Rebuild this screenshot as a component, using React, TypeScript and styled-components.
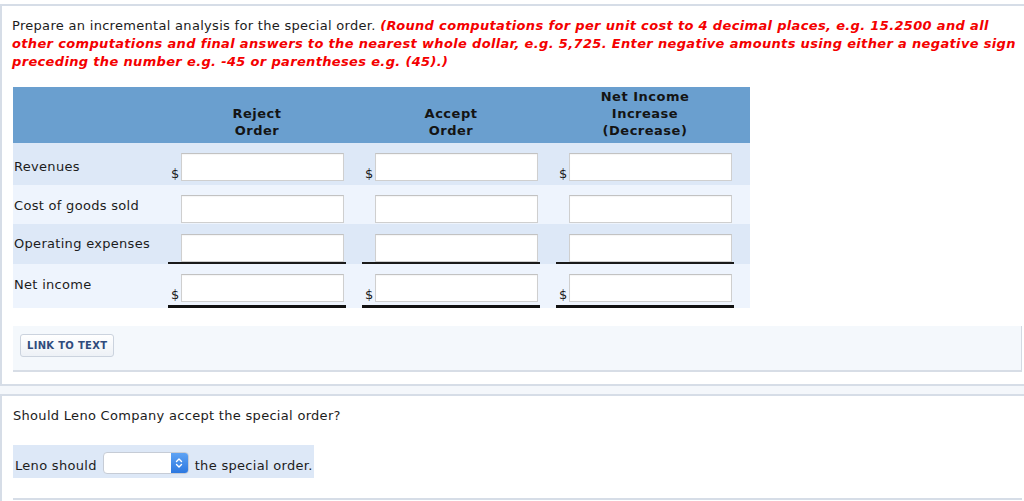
import React from 'react'
import styled, { createGlobalStyle } from 'styled-components'

const GlobalStyle = createGlobalStyle`
	html, body {
		margin: 0;
		padding: 0;
		background: #ffffff;
		overflow: hidden;
	}

	body {
		font-family: 'DejaVu Sans', Verdana, sans-serif;
		font-size: 13px;
		line-height: 18px;
		letter-spacing: 0.3px;
		color: #1c1c1c;
	}
`

const Page = styled.div`
	width: 1024px;
	padding-top: 4px;
`

const Panel = styled.section`
	box-sizing: border-box;
	width: 1024px;
	border-top: 2px solid #d6dde7;
	border-left: 2px solid #d6dde7;
	border-bottom: 2px solid #d6dde7;
	padding: 11px 2px 12px 10px;
`

const Band = styled.div`
	height: 8px;
	background: #f4f7fb;
`

const Prompt = styled.p`
	margin: 0;
`

const Hint = styled.span`
	color: #f40000;
	font-weight: bold;
	font-style: italic;
	letter-spacing: 0.34px;
`

const Grid = styled.div`
	display: grid;
	grid-template-columns: 155px repeat(3, 194px);
	margin-top: 16px;
	margin-left: 1px;
`

const HeadCell = styled.div`
	display: flex;
	align-items: flex-end;
	justify-content: center;
	height: 56px;
	box-sizing: border-box;
	padding: 0 16px 4px 0;
	background: #6a9fcf;
	color: #141414;
	font-weight: bold;
	line-height: 17px;
	letter-spacing: 0.5px;
	text-align: center;
`

const LabelCell = styled.div<{ $shade: boolean; $pad: number }>`
	padding: ${({ $pad }) => $pad}px 0 0 1px;
	background: ${({ $shade }) => ($shade ? '#dde8f7' : '#eef4fd')};
`

const ValueCell = styled.div<{ $shade: boolean }>`
	display: flex;
	align-items: stretch;
	background: ${({ $shade }) => ($shade ? '#dde8f7' : '#eef4fd')};
	padding-right: 16px;
`

const Field = styled.div<{ $top: number; $bottom: number; $rule: 'none' | 'single' | 'double' }>`
	flex: 1;
	display: flex;
	align-items: flex-end;
	padding-top: ${({ $top }) => $top}px;
	padding-bottom: ${({ $bottom }) => $bottom}px;
	border-bottom: ${({ $rule }) =>
		$rule === 'double'
			? '3px solid #111'
			: $rule === 'single'
			? '2px solid #1a1a1a'
			: '0 none'};
`

const Dollar = styled.span`
	width: 13px;
	padding-left: 3px;
	box-sizing: border-box;
	line-height: 14px;
	letter-spacing: 0;
	color: #1a1a1a;
`

const Input = styled.input`
	box-sizing: border-box;
	width: 163px;
	height: 28px;
	margin: 0;
	border: 1px solid #cfcfcf;
	border-top-color: #c2c2c2;
	background: #ffffff;
	box-shadow: inset 0 1px 1px rgba(0, 0, 0, 0.04);
	outline: none;
`

const LinkBar = styled.div`
	box-sizing: border-box;
	height: 46px;
	margin: 18px 0 0 1px;
	padding: 8px 7px;
	background: #f4f8fc;
	border-right: 1px solid #d3d9e2;
	border-bottom: 2px solid #d7dde6;
`

const LinkButton = styled.button`
	height: 23px;
	padding: 0 6px;
	border: 1px solid #cbd3de;
	border-radius: 3px;
	background: linear-gradient(#ffffff, #edf1f6);
	color: #2f4b7c;
	font-family: 'DejaVu Sans', Verdana, sans-serif;
	font-size: 10px;
	font-weight: bold;
	letter-spacing: 0.3px;
	cursor: pointer;
`

const Question = styled.p`
	margin: 0;
	padding-left: 1px;
`

const Answer = styled.div`
	display: inline-flex;
	align-items: flex-end;
	gap: 6px;
	height: 33px;
	box-sizing: border-box;
	margin: 20px 0 0 1px;
	padding: 0 1px 3px 2px;
	background: #dde8f7;
`

const Select = styled.div`
	display: flex;
	width: 86px;
	height: 22px;
	box-sizing: border-box;
	margin-bottom: 1px;
	border: 1px solid #c6ccd6;
	border-radius: 4px;
	background: #ffffff;
	overflow: hidden;
`

const SelectBody = styled.div`
	flex: 1;
`

const SelectArrow = styled.div`
	width: 17px;
	display: flex;
	align-items: center;
	justify-content: center;
	background: linear-gradient(#5ea3f4, #2c78e0);
`

const Rule = styled.div`
	height: 2px;
	margin: 20px 0 0 1px;
	background: #d6dde7;
`

const rows = [
	{ label: 'Revenues', dollar: true, top: 10, bottom: 4, rule: 'none' as const, labelPad: 15 },
	{ label: 'Cost of goods sold', dollar: false, top: 10, bottom: 1, rule: 'none' as const, labelPad: 12 },
	{ label: 'Operating expenses', dollar: false, top: 10, bottom: 0, rule: 'single' as const, labelPad: 11 },
	{ label: 'Net income', dollar: true, top: 10, bottom: 3, rule: 'double' as const, labelPad: 12 },
]

const heads = [
	['Reject', 'Order'],
	['Accept', 'Order'],
	['Net Income', 'Increase', '(Decrease)'],
]

function App() {
	return (
		<>
			<GlobalStyle />
			<Page>
				<Panel>
					<Prompt>
						Prepare an incremental analysis for the special order.{' '}
						<Hint>
							(Round computations for per unit cost to 4 decimal
							places, e.g. 15.2500 and all other computations and
							final answers to the nearest whole dollar, e.g. 5,725.
							Enter negative amounts using either a negative sign
							preceding the number e.g. -45 or parentheses e.g.
							(45).)
						</Hint>
					</Prompt>

					<Grid>
						<HeadCell />
						{heads.map((lines) => (
							<HeadCell key={lines.join()}>
								<div>
									{lines.map((l) => (
										<div key={l}>{l}</div>
									))}
								</div>
							</HeadCell>
						))}

						{rows.map((row, i) => (
							<React.Fragment key={row.label}>
								<LabelCell $shade={i % 2 === 0} $pad={row.labelPad}>
									{row.label}
								</LabelCell>
								{[0, 1, 2].map((c) => (
									<ValueCell key={c} $shade={i % 2 === 0}>
										<Field
											$top={row.top}
											$bottom={row.bottom}
											$rule={row.rule}
										>
											<Dollar>{row.dollar ? '$' : ''}</Dollar>
											<Input type="text" />
										</Field>
									</ValueCell>
								))}
							</React.Fragment>
						))}
					</Grid>

					<LinkBar>
						<LinkButton>LINK TO TEXT</LinkButton>
					</LinkBar>
				</Panel>

				<Band />

				<Panel>
					<Question>Should Leno Company accept the special order?</Question>
					<Answer>
						<span>Leno should</span>
						<Select>
							<SelectBody />
							<SelectArrow>
								<svg width="8" height="12" viewBox="0 0 8 12">
									<path
										d="M1.5 4.5 L4 2 L6.5 4.5 M1.5 7.5 L4 10 L6.5 7.5"
										fill="none"
										stroke="#ffffff"
										strokeWidth="1.4"
										strokeLinecap="round"
										strokeLinejoin="round"
									/>
								</svg>
							</SelectArrow>
						</Select>
						<span>the special order.</span>
					</Answer>
					<Rule />
				</Panel>
			</Page>
		</>
	)
}

export default App
